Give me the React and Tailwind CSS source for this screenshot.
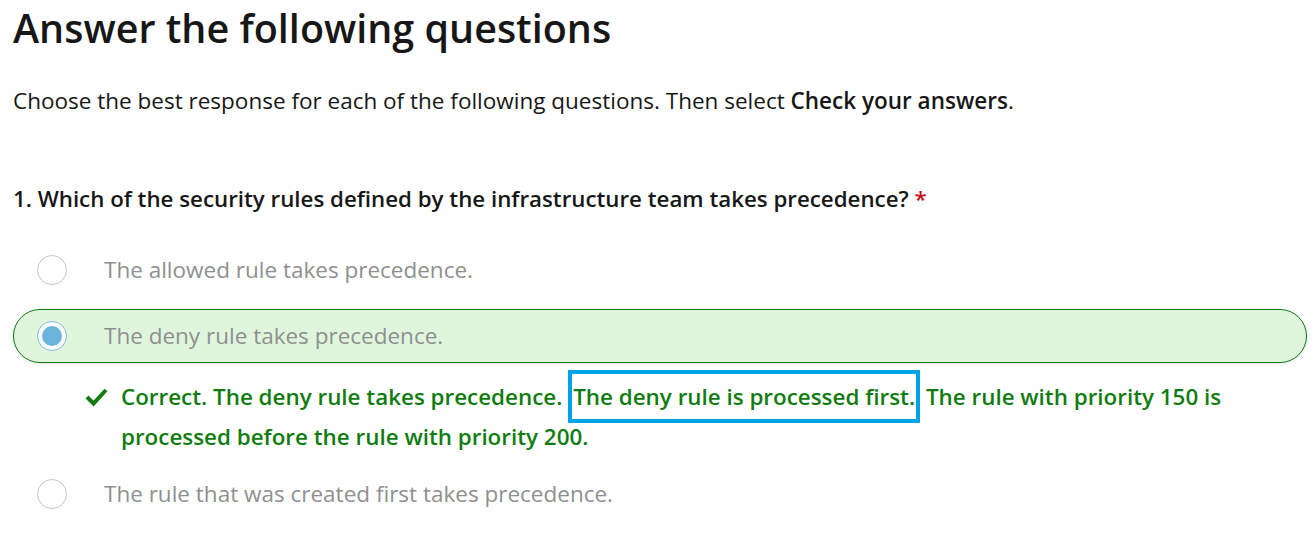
import React from "react";

const font = { fontFamily: '"Open Sans", "Noto Sans", Arial, sans-serif' };

function Radio({ checked }) {
  if (checked) {
    return (
      <span className="flex h-[30px] w-[30px] shrink-0 items-center justify-center rounded-full border border-[#7bbde0] bg-white">
        <span className="h-[20px] w-[20px] rounded-full bg-[#6ab3da]" />
      </span>
    );
  }
  return <span className="h-[30px] w-[30px] shrink-0 rounded-full border border-[#c6c6c6] bg-white" />;
}

function Option({ text, checked }) {
  return (
    <div
      className={
        "flex h-[54px] items-center gap-[37px] rounded-full border pl-[23px] " +
        (checked ? "border-[#107c10] bg-[#dff6dd] shadow-[0_1px_3px_rgba(0,0,0,0.12)]" : "border-transparent")
      }
    >
      <Radio checked={checked} />
      <span className="text-[22.5px] leading-[32px] text-[#8f8f8f]">{text}</span>
    </div>
  );
}

export default function App() {
  return (
    <div className="h-[549px] w-[1314px] overflow-hidden bg-white pl-[13px] pr-[7px]" style={font}>
      <h1 className="text-[39.5px] font-semibold leading-[56px] text-[#171717]">Answer the following questions</h1>

      <p className="mt-[29px] text-[22.5px] leading-[32px] text-[#171717]">
        Choose the best response for each of the following questions. Then select{" "}
        <span className="font-semibold">Check your answers</span>.
      </p>

      <div className="mt-[66px] text-[22.3px] font-semibold leading-[32px] text-[#171717]">
        1. Which of the security rules defined by the infrastructure team takes precedence?{" "}
        <span className="text-[#c50f1f]">*</span>
      </div>

      <div className="mt-[28px]">
        <Option text="The allowed rule takes precedence." />
      </div>
      <div className="mt-[12px]">
        <Option text="The deny rule takes precedence." checked />
      </div>

      <div className="mt-[14px] flex items-start pl-[72px] pr-[40px]">
        <svg className="mt-[10px] shrink-0" width="23" height="20" viewBox="0 0 23 20">
          <path d="M2 10 L8.5 16.5 L21 3" fill="none" stroke="#107c10" strokeWidth="4" />
        </svg>
        <p className="ml-[13px] text-[22.4px] font-semibold leading-[40px] text-[#107c10]">
          Correct. The deny rule takes precedence.{" "}
          <span className="border-[4px] border-[#00a3e6] px-[1px] py-[7px]">The deny rule is processed first.</span>{" "}
          The rule with priority 150 is processed before the rule with priority 200.
        </p>
      </div>

      <div className="mt-[10px]">
        <Option text="The rule that was created first takes precedence." />
      </div>
    </div>
  );
}
